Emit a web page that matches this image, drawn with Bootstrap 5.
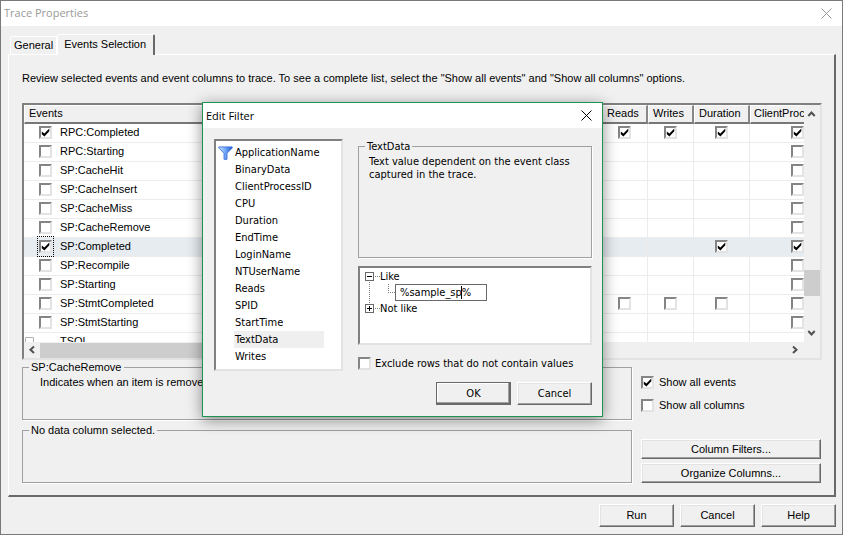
<!DOCTYPE html>
<html lang="en">
<head>
<meta charset="utf-8">
<meta name="viewport" content="width=device-width, initial-scale=1">
<title>Trace Properties</title>
<link rel="stylesheet" href="https://cdn.jsdelivr.net/npm/bootstrap@5.3.0/dist/css/bootstrap.min.css">
<style>
:root { --face: #f0f0f0; --shade: #a0a0a0; --dark: #696969; --soft: #e3e3e3; }
body { font: 11px/13px "Liberation Sans", Arial, sans-serif; color: #000; background: var(--face); }
.app-window { border: 1px solid #7a7a7a; background: var(--face); overflow: hidden; }
.caption-bar { height: 25px; background: #fff; font: 11px/16px "Open Sans", sans-serif; padding: 0 10px 0 3px; }
.app-window > .caption-bar { color: #999; }
.caption-bar h1, .caption-bar h2 { font: inherit; margin: 0; }
.close-btn { border: 0; background: none; padding: 0; display: flex; color: inherit; }
.app-body { padding: 8px 6px 7px 7px; min-height: 0; }

.tab-strip { height: 20px; padding-left: 2px; position: relative; z-index: 1; }
.tab-strip .nav-link { color: #000; border: 1px solid #fff; border-bottom: 0; border-radius: 2px 2px 0 0; padding: 0 3px; height: 18px; line-height: 17px; background: var(--face); }
.tab-strip .nav-link.active { height: 21px; margin-bottom: -1px; padding: 0 7px 0 6px; line-height: 18px; border-right: 2px solid var(--dark); }
.tab-sheet { border: 1px solid #fff; border-right: 2px solid var(--dark); border-bottom: 2px solid var(--dark); padding: 17px 12px 12px 13px; min-height: 0; }
.intro { margin: 0 0 18px; }

.sunken { background: #fff; border: 2px solid; border-color: #808080 var(--soft) var(--soft) #808080; }
.grid-box { min-height: 0; overflow: hidden; margin-bottom: 1px; }
.grid-area { min-height: 0; }
.grid-view { overflow: hidden; min-width: 0; }
.events { table-layout: fixed; width: 100%; border-collapse: separate; border-spacing: 0; }
.events th { height: 19px; padding: 0 0 0 4px; font-weight: 400; background: var(--face); border: 1px solid #fff; border-right: 2px solid #888; border-bottom: 2px solid #777; overflow: hidden; white-space: nowrap; line-height: 15px; }
.events th:last-child { border-right: 0; padding-left: 3px; }
.events td { height: 19px; padding: 0; border-bottom: 1px solid #ececec; border-right: 1px solid #ececec; text-align: center; line-height: 13px; vertical-align: middle; }
.events td:last-child { border-right: 0; text-align: right; }
.events td:first-child { text-align: left; padding-left: 15px; }
.events tr.picked td { background: #e7ecf1; }
.events input { vertical-align: top; }
.events label { margin-left: 8px; vertical-align: top; }
.events .focus-box { display: inline-block; vertical-align: middle; padding: 3px 1px; margin: -3px -1px; outline: 1px dotted #000; }
.c-reads, .c-writes { width: 46px; } .c-dur { width: 56px; } .c-proc { width: 54px; }
.events td.tree-cell { padding-left: 1px; }
.tree-cell svg, .tree-cell span { vertical-align: middle; }
.tree-cell span { margin-left: 26px; }

.box { appearance: none; width: 13px; height: 13px; margin: 0; flex: none; background: #fff; border: 2px solid; border-color: #858585 var(--soft) var(--soft) #858585; border-radius: 0; }
.box:checked { background: #fff url("data:image/svg+xml,%3Csvg xmlns='http://www.w3.org/2000/svg' viewBox='0 0 9 9'%3E%3Cpath d='M.8 3.4v2.8L3.4 8.4 8.3 3.2V.6L3.4 5.6z'/%3E%3C/svg%3E") center / 9px 9px no-repeat; }

.vbar { width: 16px; background: var(--face); }
.hbar { height: 16px; flex: none; background: var(--face); }
.thumb { background: #cdcdcd; }
.vbar .thumb { height: 26px; margin-bottom: 30px; }
.hbar .thumb { width: 50%; height: 15px; }

.group { border: 1px solid var(--shade); box-shadow: 1px 1px #fff; padding: 0 7px; margin: 0; min-width: 0; }
.group legend { float: none; width: auto; font: inherit; margin: 0 0 0 -1px; padding: 0 2px; }
.group p { margin: 2px 10px 0; }
.lower { gap: 9px; margin-right: 1px; }
.lower-left .group { height: 59px; }
.side { width: 180px; padding-top: 15px; }
.side label { padding-left: 5px; }
.side .next-row { margin-top: 10px; }
.btn3d { width: 75px; height: 23px; padding: 0; color: #000; background: var(--face); font: inherit; border: 1px solid; border-color: #fff var(--dark) var(--dark) #fff; border-radius: 0; box-shadow: inset -1px -1px var(--shade), inset 1px 1px var(--soft); }
.btn3d:hover { background: var(--face); color: #000; }
.btn3d.wide { width: 100%; height: 20px; }
.btn3d.default { border-color: var(--dark); box-shadow: inset -1px -1px var(--dark), inset -2px -2px var(--shade), inset 1px 1px #fff; }
.btn-line { gap: 6px; }
.app-foot { margin-top: 7px; }

.filter-dialog { position: absolute; left: 202px; top: 102px; width: 401px; z-index: 10; background: var(--face); border: 1px solid #1e9250; box-shadow: 0 3px 14px rgba(0,0,0,.45); font: 11px/13px "DejaVu Sans Condensed", "DejaVu Sans", sans-serif; font-stretch: condensed; }
.dialog-body { padding: 11px 10px 11px 11px; gap: 15px; }
.dialog-body label { padding-left: 4px; }
.field-list { width: 129px; padding: 3px 2px 4px; flex: none; }
.field-list li { height: 17px; display: flex; }
.field-list li > span { width: 16px; flex: none; display: flex; align-items: center; }
.field-list button { width: 90px; border: 0; background: none; padding: 0 0 0 1px; text-align: left; font: inherit; white-space: nowrap; color: #000; }
.field-list button[aria-selected=true] { background: #efefef; }
.info { height: 118px; margin: 1px 0 8px; }
.info p { margin: 2px 3px 0; }
.cond-tree { height: 79px; padding: 0 0 0 4px; margin-bottom: 12px; }
.cond-tree li { display: flex; height: 16px; align-items: center; }
.cond-tree svg { flex: none; }
.value-wrap { position: relative; }
.value-wrap input { width: 92px; height: 17px; border: 1px solid var(--dark); padding: 0 4px; font: inherit; color: #000; display: block; }
.caret { position: absolute; left: 66px; top: 2px; width: 1px; height: 13px; background: #000; }
</style>
</head>
<body>
<main class="app-window vh-100 d-flex flex-column">
  <header class="caption-bar d-flex align-items-center justify-content-between">
    <h1>Trace Properties</h1>
    <button class="close-btn" aria-label="Close"><svg width="11" height="11" viewBox="0 0 11 11" stroke="currentColor"><path d="M.5.5l10 10M10.5.5l-10 10"/></svg></button>
  </header>
  <div class="app-body d-flex flex-column flex-fill">
    <nav class="tab-strip nav d-flex align-items-end">
      <a class="nav-link" href="#general">General</a>
      <a class="nav-link active" href="#events" aria-current="page">Events Selection</a>
    </nav>
    <section class="tab-sheet d-flex flex-column flex-fill">
      <p class="intro">Review selected events and event columns to trace. To see a complete list, select the "Show all events" and "Show all columns" options.</p>
      <div class="grid-box sunken d-flex flex-column flex-fill">
        <div class="grid-area d-flex flex-fill">
          <div class="grid-view flex-fill">
            <table class="events">
              <colgroup><col><col class="c-reads"><col class="c-writes"><col class="c-dur"><col class="c-proc"></colgroup>
              <thead><tr><th>Events</th><th>Reads</th><th>Writes</th><th>Duration</th><th>ClientProc</th></tr></thead>
              <tbody id="rows"></tbody>
            </table>
          </div>
          <div class="vbar d-flex flex-column align-items-center">
            <svg width="16" height="16" viewBox="0 0 16 16" fill="none" stroke="#505050" stroke-width="2"><path d="M4.300 11L7.500 7.500l3.200 3.500"/></svg>
            <div class="thumb w-100 mt-auto"></div>
            <svg width="16" height="16" viewBox="0 0 16 16" fill="none" stroke="#505050" stroke-width="2"><path d="M4.300 5L7.500 8.500l3.200-3.500"/></svg>
          </div>
        </div>
        <div class="hbar d-flex align-items-center pe-3">
          <svg width="16" height="16" viewBox="0 0 16 16" fill="none" stroke="#505050" stroke-width="2"><path d="M10 4.500L6.500 7.700l3.500 3.200"/></svg>
          <div class="thumb"></div>
          <svg class="ms-auto" width="16" height="16" viewBox="0 0 16 16" fill="none" stroke="#505050" stroke-width="2"><path d="M5 4.500l3.500 3.200L5 10.900"/></svg>
        </div>
      </div>
      <div class="lower d-flex">
        <div class="d-flex flex-column flex-fill gap-1 lower-left">
          <fieldset class="group"><legend>SP:CacheRemove</legend><p>Indicates when an item is removed</p></fieldset>
          <fieldset class="group"><legend>No data column selected.</legend></fieldset>
        </div>
        <div class="side d-flex flex-column">
          <div class="d-flex align-items-center"><input class="box" type="checkbox" id="allEvents" checked><label for="allEvents">Show all events</label></div>
          <div class="next-row d-flex align-items-center"><input class="box" type="checkbox" id="allColumns"><label for="allColumns">Show all columns</label></div>
          <button class="btn btn3d wide mt-auto">Column Filters...</button>
          <button class="btn btn3d wide mt-1">Organize Columns...</button>
        </div>
      </div>
    </section>
    <footer class="app-foot btn-line d-flex justify-content-end">
      <button class="btn btn3d">Run</button><button class="btn btn3d">Cancel</button><button class="btn btn3d">Help</button>
    </footer>
  </div>
</main>

<div class="filter-dialog" role="dialog" aria-labelledby="filterTitle">
  <header class="caption-bar d-flex align-items-center justify-content-between">
    <h2 id="filterTitle">Edit Filter</h2>
    <button class="close-btn" aria-label="Close"><svg width="11" height="11" viewBox="0 0 11 11" stroke="currentColor"><path d="M.5.5l10 10M10.5.5l-10 10"/></svg></button>
  </header>
  <div class="dialog-body d-flex align-items-start">
    <ul class="field-list sunken list-unstyled mb-0" id="fields"></ul>
    <div class="flex-fill">
      <fieldset class="group info"><legend>TextData</legend><p>Text value dependent on the event class captured in the trace.</p></fieldset>
      <ul class="cond-tree sunken list-unstyled">
        <li><svg width="16" height="16" fill="none" stroke="#000" shape-rendering="crispEdges"><path d="M10.500 8.500h5M5.500 14v2" stroke="#808080" stroke-dasharray="1 1"/><path d="M1.500 4.500h8v8h-8z" stroke="#696969"/><path d="M3 8.500h5"/></svg><span>Like</span></li>
        <li><svg width="31" height="16" fill="none" stroke="#808080" stroke-dasharray="1 1" shape-rendering="crispEdges"><path d="M5.500 0v16M24.500 0v8.500h6"/></svg>
          <span class="value-wrap"><input type="text" value="%sample_sp%" aria-label="Like value"><span class="caret"></span></span></li>
        <li><svg width="16" height="16" fill="none" stroke="#000" shape-rendering="crispEdges"><path d="M10.500 8.500h5M5.500 0v4" stroke="#808080" stroke-dasharray="1 1"/><path d="M1.500 4.500h8v8h-8z" stroke="#696969"/><path d="M3 8.500h5M5.500 6v5"/></svg><span>Not like</span></li>
      </ul>
      <div class="d-flex align-items-center"><input class="box" type="checkbox" id="exclude"><label for="exclude">Exclude rows that do not contain values</label></div>
      <div class="btn-line d-flex justify-content-end mt-2 pt-1"><button class="btn btn3d default">OK</button><button class="btn btn3d">Cancel</button></div>
    </div>
  </div>
</div>

<script src="https://cdn.jsdelivr.net/npm/bootstrap@5.3.0/dist/js/bootstrap.bundle.min.js"></script>
<script>
// c: checked, u: unchecked, -: no box; order is event, reads, writes, duration, client process
const events = [
  ["RPC:Completed", "ccccc"], ["RPC:Starting", "u---u"], ["SP:CacheHit", "u---u"], ["SP:CacheInsert", "u---u"],
  ["SP:CacheMiss", "u---u"], ["SP:CacheRemove", "u---u"], ["SP:Completed", "c--cc"], ["SP:Recompile", "u---u"],
  ["SP:Starting", "u---u"], ["SP:StmtCompleted", "uuuuu"], ["SP:StmtStarting", "u---u"]
];
const columns = ["", "Reads", "Writes", "Duration", "ClientProc"];
const box = (state, attr) => state === "-" ? "" : `<input class="box" type="checkbox" ${attr}${state === "c" ? " checked" : ""}>`;
document.getElementById("rows").innerHTML = events.map(([name, s], i) => {
  const picked = name === "SP:Completed";
  let first = box(s[0], `id="ev${i}"`);
  if (picked) first = `<span class="focus-box">${first}</span>`;
  return `<tr class="${picked ? "picked" : ""}"><td>${first}<label for="ev${i}" class="align-middle">${name}</label></td>` +
    [1, 2, 3, 4].map(c => `<td>${box(s[c], `aria-label="${name} ${columns[c]}"`)}</td>`).join("") + "</tr>";
}).join("") + `<tr><td class="tree-cell"><svg width="9" height="9"><path d="M.5.5h8v8h-8z" fill="none" stroke="#b0b0b0"/></svg><span>TSQL</span></td><td></td><td></td><td></td><td></td></tr>`;

const funnel = `<svg width="15" height="14" viewBox="0 0 15 14"><defs><linearGradient id="fg"><stop offset="0" stop-color="#d5e8ff"/><stop offset=".5" stop-color="#6fa6f5"/><stop offset="1" stop-color="#2457c8"/></linearGradient></defs><path d="M.8.900h13.400v1L9 7.300v6H6v-6L.8 1.900z" fill="url(#fg)" stroke="#3b6fe0" stroke-width=".9"/></svg>`;
document.getElementById("fields").innerHTML =
  ["ApplicationName", "BinaryData", "ClientProcessID", "CPU", "Duration", "EndTime", "LoginName", "NTUserName", "Reads", "SPID", "StartTime", "TextData", "Writes"]
  .map((n, i) => `<li><span>${i ? "" : funnel}</span><button aria-selected="${n === "TextData"}">${n}</button></li>`).join("");
</script>
</body>
</html>
